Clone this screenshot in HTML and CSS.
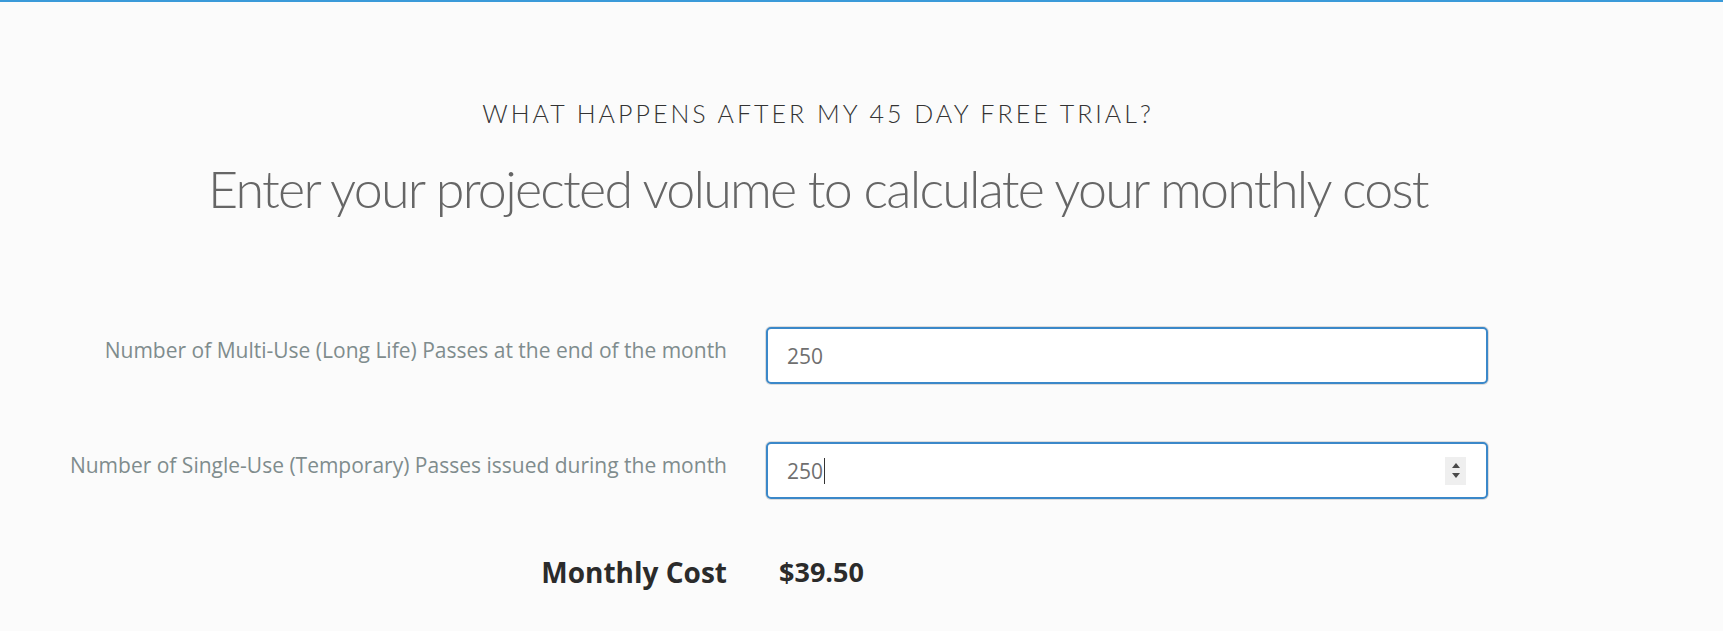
FILE: index.html
```html
<!DOCTYPE html>
<html lang="en">
<head>
<meta charset="utf-8">
<title>Pricing calculator</title>
<link rel="stylesheet" href="styles.css">
</head>
<body>
<section class="calc">
  <header class="calc-head">
    <p class="eyebrow">What happens after my 45 day free trial?</p>
    <h1 class="title">Enter your projected volume to calculate your monthly cost</h1>
  </header>
  <div class="form">
    <div class="row">
      <label class="label">Number of Multi-Use (Long Life) Passes at the end of the month</label>
      <div class="field"><span class="value">250</span></div>
    </div>
    <div class="row">
      <label class="label">Number of Single-Use (Temporary) Passes issued during the month</label>
      <div class="field"><span class="value">250</span><span class="caret"></span><span class="spacer"></span><span class="spinner"><span class="tri up"></span><span class="tri down"></span></span></div>
    </div>
    <div class="row total">
      <div class="total-label">Monthly Cost</div>
      <div class="total-value">$39.50</div>
    </div>
  </div>
</section>
</body>
</html>
```

FILE: styles.css
```css
html, body {
  margin: 0;
  padding: 0;
}
body {
  background: #fbfbfb;
  border-top: 2px solid #3a9ad9;
  font-family: "Open Sans", "Liberation Sans", sans-serif;
  height: 629px;
  overflow: hidden;
}
.calc-head {
  padding-top: 97px;
  padding-right: 87px;
  text-align: center;
}
.eyebrow {
  margin: 0;
  font-family: "Lato", "Open Sans", sans-serif;
  font-weight: 300;
  font-size: 25px;
  line-height: 28px;
  letter-spacing: 3px;
  text-transform: uppercase;
  color: #333;
}
.title {
  margin: 30px 0 0;
  font-family: "Lato", "Open Sans", sans-serif;
  font-weight: 300;
  font-size: 52px;
  line-height: 62px;
  letter-spacing: -1.75px;
  color: #666;
}
.form {
  margin-top: 108px;
  display: flex;
  flex-direction: column;
  gap: 58px;
}
.row {
  display: grid;
  grid-template-columns: 727px 722px;
  column-gap: 39px;
}
.label {
  text-align: right;
  font-size: 21px;
  line-height: 28px;
  padding-top: 9px;
  color: #7f8c8d;
}
.field {
  box-sizing: border-box;
  height: 57px;
  display: flex;
  align-items: center;
  padding: 0 18px 0 19px;
  background: #fff;
  border: 2px solid #3b88c9;
  border-radius: 5px;
  box-shadow: 0 0 0 1px #dcdcdc;
  font-size: 21px;
  color: #6f6f6f;
}
.caret {
  width: 1px;
  height: 26px;
  background: #333;
  margin-left: 1px;
}
.spacer {
  flex: 1;
}
.spinner {
  width: 21px;
  height: 28px;
  margin-right: 2px;
  background: #efefef;
  display: flex;
  flex-direction: column;
  align-items: center;
  justify-content: center;
  gap: 5px;
}
.tri {
  width: 0;
  height: 0;
  border-left: 4.5px solid transparent;
  border-right: 4.5px solid transparent;
}
.tri.up {
  border-bottom: 5px solid #4a4a4a;
}
.tri.down {
  border-top: 5px solid #4a4a4a;
}
.total {
  align-items: center;
  margin-top: -3px;
}
.total-label {
  text-align: right;
  font-size: 28px;
  font-weight: 700;
  line-height: 36px;
  color: #2b2b2b;
}
.total-value {
  padding-left: 13px;
  font-size: 27px;
  font-weight: 700;
  line-height: 36px;
  color: #2b2b2b;
}
```
